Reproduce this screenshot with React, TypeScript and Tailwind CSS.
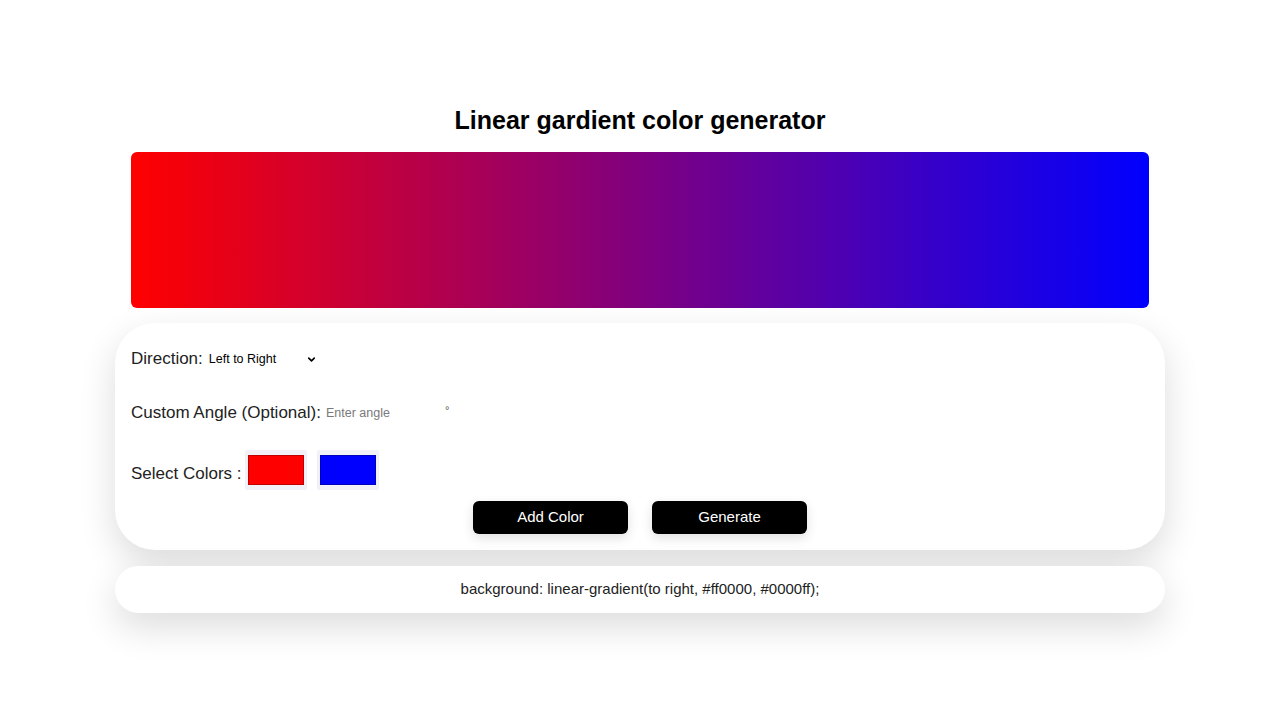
import { ChevronDown } from 'lucide-react'

const colors = ['#ff0000', '#0000ff']

export default function App() {
  const css = `background: linear-gradient(to right, ${colors.join(', ')});`

  return (
    <main className="w-full min-h-[720px] bg-white font-['Liberation_Sans',Arial,sans-serif] text-[#222]">
      <div className="w-[1050px] mx-auto pt-[105px] flex flex-col">
        <h1 className="text-center text-[25px] leading-[31px] font-bold text-black">
          Linear gardient color generator
        </h1>

        <div className="px-4 mt-[16px]">
          <div className="h-[156px] rounded-[6px] bg-[linear-gradient(to_right,#ff0000,#0000ff)]" />
        </div>

        <section className="mt-[15px] rounded-[40px] bg-white px-4 pt-[25px] pb-[16px] shadow-[0_14px_36px_rgba(0,0,0,0.14)]">
          <div className="flex items-center h-[22px]">
            <label className="text-[17px]">Direction:</label>
            <div className="ml-[6px] flex items-center w-[111px] justify-between text-[12.5px] text-black">
              <span>Left to Right</span>
              <ChevronDown className="size-[11px] mr-[3px]" strokeWidth={3.5} />
            </div>
          </div>

          <div className="flex items-center h-[22px] mt-[32px]">
            <label className="text-[17px]">Custom Angle (Optional):</label>
            <input
              type="text"
              placeholder="Enter angle"
              className="ml-[5px] w-[115px] text-[12.5px] outline-none placeholder:text-[#7a7a7a]"
            />
            <span className="text-[11px] -mt-[6px] ml-[4px] text-[#555]">°</span>
          </div>

          <div className="flex items-end h-[40px] mt-[26px]">
            <label className="text-[17px] leading-[20px] mr-[3px] mb-[6px]">Select Colors :</label>
            <div className="flex gap-[10px]">
              {colors.map((c) => (
                <div
                  key={c}
                  className="w-[62px] h-[40px] px-[3px] py-[5px] bg-[#f3f1f8] rounded-[2px]"
                >
                  <div
                    className="w-full h-full border border-black/25"
                    style={{ background: c }}
                  />
                </div>
              ))}
            </div>
          </div>

          <div className="flex justify-center gap-[24px] mt-[11px]">
            <button className="w-[155px] h-[33px] rounded-[6px] bg-black text-white text-[15px] shadow-[0_4px_12px_rgba(0,0,0,0.12)]">
              Add Color
            </button>
            <button className="w-[155px] h-[33px] rounded-[6px] bg-black text-white text-[15px] shadow-[0_4px_12px_rgba(0,0,0,0.12)]">
              Generate
            </button>
          </div>
        </section>

        <div className="mt-[16px] h-[47px] rounded-full bg-white flex items-center justify-center text-[15px] shadow-[0_14px_36px_rgba(0,0,0,0.14)]">
          {css}
        </div>
      </div>
    </main>
  )
}
